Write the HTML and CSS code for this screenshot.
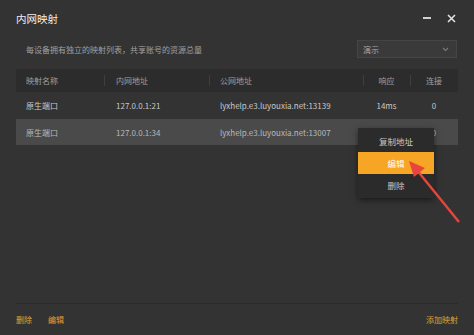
FILE: index.html
```html
<!DOCTYPE html>
<html lang="zh-CN">
<head>
  <meta charset="UTF-8" />
  <title>内网映射</title>
  <link rel="stylesheet" href="styles.css">
</head>
<body>
  <div class="dialog">
    <header class="titlebar">
      <h1>内网映射</h1>
      <div class="win-actions">
        <span class="win-min"></span>
        <svg class="win-close" width="9" height="9" viewBox="0 0 9 9">
          <path d="M1 1L8 8M8 1L1 8" stroke="#e6e6e6" stroke-width="1.5" />
        </svg>
      </div>
    </header>

    <div class="toolbar">
      <p class="hint">每设备拥有独立的映射列表，共享账号的资源总量</p>
      <div class="select">
        <span>演示</span>
        <svg width="7" height="5" viewBox="0 0 7 5">
          <path d="M1 1L3.5 3.5L6 1" fill="none" stroke="#7a7a7a" stroke-width="1.1" />
        </svg>
      </div>
    </div>

    <div class="table">
      <div class="row head">
        <div class="cell c-name">映射名称</div>
        <div class="cell c-local">内网地址</div>
        <div class="cell c-public">公网地址</div>
        <div class="cell c-ping">响应</div>
        <div class="cell c-conn">连接</div>
      </div>
      <div class="row">
        <div class="cell c-name">原生端口</div>
        <div class="cell c-local">127.0.0.1:21</div>
        <div class="cell c-public">lyxhelp.e3.luyouxia.net:13139</div>
        <div class="cell c-ping">14ms</div>
        <div class="cell c-conn">0</div>
      </div>
      <div class="row selected">
        <div class="cell c-name">原生端口</div>
        <div class="cell c-local">127.0.0.1:34</div>
        <div class="cell c-public">lyxhelp.e3.luyouxia.net:13007</div>
        <div class="cell c-ping"></div>
        <div class="cell c-conn">0</div>
      </div>
    </div>

    <div class="spacer"></div>

    <footer class="footer">
      <div class="foot-left">
        <a>删除</a>
        <a>编辑</a>
      </div>
      <a>添加映射</a>
    </footer>

    <ul class="menu">
      <li>复制地址</li>
      <li class="active">编辑</li>
      <li>删除</li>
    </ul>

    <svg class="arrow" width="474" height="335" viewBox="0 0 474 335">
      <line x1="459" y1="222" x2="416" y2="169" stroke="#e8453c" stroke-width="2.4" />
      <polygon points="409,161 425,168 414,177" fill="#e8453c" />
    </svg>
  </div>
</body>
</html>
```

FILE: styles.css
```css
body {
  margin: 0;
  padding: 0;
  background: #333333;
  font-family: "Noto Sans CJK SC", "Noto Sans", sans-serif;
  color: #c8c8c8;
}

.dialog {
  position: relative;
  width: 474px;
  height: 335px;
  display: flex;
  flex-direction: column;
  padding: 0 16px;
  box-sizing: border-box;
  overflow: hidden;
}

.titlebar {
  height: 36px;
  display: flex;
  align-items: center;
  justify-content: space-between;
}

.titlebar h1 {
  margin: 0;
  font-size: 10.5px;
  font-weight: normal;
  color: #f0f0f0;
}

.win-actions {
  display: flex;
  align-items: center;
  gap: 16px;
  margin-right: 2px;
}

.win-min {
  width: 8px;
  height: 2px;
  background: #d0d0d0;
}

.toolbar {
  margin-top: 4px;
  height: 18px;
  display: flex;
  align-items: center;
  justify-content: space-between;
}

.hint {
  margin: 0 0 0 10px;
  font-size: 8px;
  color: #a0a0a0;
}

.select {
  width: 100px;
  height: 18px;
  box-sizing: border-box;
  margin-right: 1px;
  border: 1px solid #454545;
  background: #3a3a3a;
  display: flex;
  align-items: center;
  justify-content: space-between;
  padding: 0 7px 0 5px;
  font-size: 8px;
  color: #aaaaaa;
}

.table {
  margin-top: 11px;
  font-size: 8px;
}

.row {
  display: flex;
  height: 27px;
  align-items: center;
}

.row.head {
  height: 23px;
  background: #2c2c2c;
  color: #a0a0a0;
}

.row.selected {
  background: #4a4a4a;
  height: 26px;
  color: #b8b8b8;
}

.cell {
  box-sizing: border-box;
  height: 100%;
  display: flex;
  align-items: center;
  position: relative;
}

.head .cell + .cell::before {
  content: "";
  position: absolute;
  left: 0;
  top: 6px;
  bottom: 6px;
  width: 1px;
  background: #3f3f3f;
}

.c-name { width: 88px; padding-left: 10px; }
.c-local { width: 105px; padding-left: 12px; }
.c-public { width: 154px; padding-left: 11px; }
.c-ping { width: 47px; justify-content: center; }
.c-conn { width: 48px; justify-content: center; }

.spacer {
  flex: 1;
}

.footer {
  border-top: 1px solid #2b2b2b;
  height: 31px;
  display: flex;
  align-items: center;
  justify-content: space-between;
  font-size: 8px;
  color: #e3a032;
}

.foot-left {
  display: flex;
  gap: 16px;
}

.footer a {
  cursor: pointer;
}

.menu {
  position: absolute;
  left: 358px;
  top: 128px;
  width: 76px;
  margin: 0;
  padding: 2px 0;
  list-style: none;
  background: #2b2b2b;
  box-shadow: 0 2px 6px rgba(0, 0, 0, 0.5);
  font-size: 8.5px;
  color: #c8c8c8;
}

.menu li {
  height: 22px;
  line-height: 22px;
  text-align: center;
}

.menu li.active {
  background: #f6a524;
  color: #ffffff;
}

.arrow {
  position: absolute;
  left: 0;
  top: 0;
  pointer-events: none;
}
```
